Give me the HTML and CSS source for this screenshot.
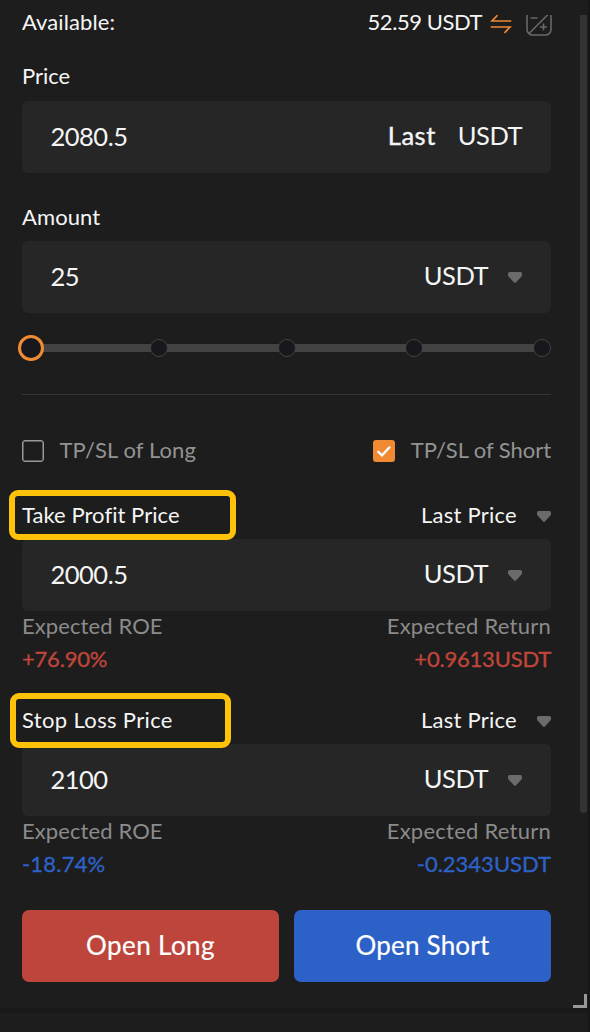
FILE: index.html
```html
<!DOCTYPE html>
<html lang="en">
<head>
<meta charset="utf-8">
<title>Futures order</title>
<link rel="stylesheet" href="styles.css">
</head>
<body>
<svg class="defs" width="0" height="0">
  <symbol id="caret" viewBox="0 0 14 11"><path d="M1.6 0h10.8Q14 0 14 1.5V3.2Q14 4 13.4 4.6L8.2 10.2Q7 11.4 5.8 10.2L.6 4.6Q0 4 0 3.2V1.5Q0 0 1.6 0z" fill="#6b6b6b"/></symbol>
</svg>
<div class="panel">
  <div class="viewport">
    <div class="form">
      <div class="row available">
        <span class="t-available">Available:</span>
        <div class="balance">
          <span class="t-balance">52.59 USDT</span>
          <svg class="swap" width="22" height="20" viewBox="0 0 22 20" fill="none" stroke="#ee8a33" stroke-width="1.7"><path d="M21.3 7H2L7.5 1.2M.7 13H20l-5.500 5.800"/></svg>
          <svg class="calc" width="26" height="26" viewBox="0 0 26 26" fill="none" stroke="#686868" stroke-width="1.6"><rect x="1" y="1" width="24" height="24" rx="5.500"/><path d="M3 23.500L24 2.500M4.500 8h7M14 17h7M17.500 13.500v7"/></svg>
        </div>
      </div>
      <div class="row price-label"><span class="t-price">Price</span></div>
      <div class="field">
        <span class="num">2080.5</span>
        <div class="unit"><span class="last">Last</span><span class="usdt">USDT</span></div>
      </div>
      <div class="row amount-label"><span class="t-amount">Amount</span></div>
      <div class="field">
        <span class="num">25</span>
        <div class="unit"><span class="usdt">USDT</span><svg class="caret"><use href="#caret"/></svg></div>
      </div>
      <div class="slider">
        <i class="handle"></i><i class="dot"></i><i class="dot"></i><i class="dot"></i><i class="dot"></i>
      </div>
      <div class="divider"></div>
      <div class="row checks">
        <div class="check"><span class="box"></span><span class="t-long">TP/SL of Long</span></div>
        <div class="check"><svg class="ticked" width="22" height="22" viewBox="0 0 22 22"><rect width="22" height="22" rx="3" fill="#f08b34"/><path d="M4.500 11.200L9 15.300L17 6.700" fill="none" stroke="#fff" stroke-width="2.300"/></svg><span class="t-short">TP/SL of Short</span></div>
      </div>
      <div class="row trigger take">
        <span class="t-take">Take Profit Price</span>
        <div class="source"><span class="t-last">Last Price</span><svg class="caret"><use href="#caret"/></svg></div>
        <div class="mark mark-take"></div>
      </div>
      <div class="field">
        <span class="num">2000.5</span>
        <div class="unit"><span class="usdt">USDT</span><svg class="caret"><use href="#caret"/></svg></div>
      </div>
      <div class="stats muted"><span class="t-roe">Expected ROE</span><span class="t-return">Expected Return</span></div>
      <div class="stats value red"><span class="t-pct">+76.90%</span><span class="t-gain">+0.9613USDT</span></div>
      <div class="row trigger stop">
        <span class="t-stop">Stop Loss Price</span>
        <div class="source"><span class="t-last">Last Price</span><svg class="caret"><use href="#caret"/></svg></div>
        <div class="mark mark-stop"></div>
      </div>
      <div class="field">
        <span class="num">2100</span>
        <div class="unit"><span class="usdt">USDT</span><svg class="caret"><use href="#caret"/></svg></div>
      </div>
      <div class="stats muted"><span class="t-roe">Expected ROE</span><span class="t-return">Expected Return</span></div>
      <div class="stats value blue"><span class="t-pct">-18.74%</span><span class="t-gain">-0.2343USDT</span></div>
      <div class="actions">
        <button class="btn long">Open Long</button>
        <button class="btn short">Open Short</button>
      </div>
    </div>
    <div class="scrollbar"></div>
  </div>
</div>
<div class="resize"></div>
</body>
</html>
```
FILE: styles.css
```css
* { box-sizing: border-box; }
body {
  margin: 0;
  width: 590px;
  height: 1032px;
  overflow: hidden;
  background: #1d1d1d;
  border-right: 2px solid #171717;
  color: #f5f5f5;
  font: 22px/28px Lato, sans-serif;
  letter-spacing: 0.1px;
  white-space: nowrap;
  position: relative;
}
.defs { position: absolute; }
.panel { height: 1013px; padding-top: 15px; border-bottom: 5px solid #191919; }
.viewport { display: flex; justify-content: space-between; height: 993px; overflow: hidden; padding: 0 1px 0 0; }
.form { width: 551px; padding-left: 22px; margin-top: -6px; flex: none; }
.scrollbar { width: 7px; height: 798px; background: #333; border-radius: 0 0 4px 4px; }
.row { display: flex; justify-content: space-between; align-items: center; height: 28px; }
.row span:not(.box) { padding-bottom: 2px; }
.row .t-available, .row .t-balance { padding-bottom: 0; }
.balance { display: flex; align-items: center; margin-right: -0.5px; }
.t-balance { letter-spacing: -0.45px; }
.swap { margin-left: 8px; margin-top: 2px; }
.calc { margin-left: 13.5px; margin-top: -1px; }
.t-price { letter-spacing: 0; }
.price-label { margin: 26px 0 10px; }
.amount-label { margin: 31px 0 9px; }
.field {
  display: flex;
  justify-content: space-between;
  align-items: center;
  height: 72px;
  padding: 0 29px 3px 28.5px;
  background: #262626;
  border-radius: 6px;
  font-size: 25.5px;
}
.num { letter-spacing: -0.5px; }
.unit { display: flex; align-items: center; }
.usdt, .last { padding-bottom: 1px; }
.usdt { letter-spacing: -0.5px; }
.last { margin-right: 22px; letter-spacing: 0.5px; -webkit-text-stroke: 0.4px; }
.caret { width: 14px; height: 11px; display: block; }
.unit .caret { margin: 3px 0 0 20px; }
.slider {
  display: flex;
  justify-content: space-between;
  align-items: center;
  height: 26px;
  margin-top: 22px;
  background: linear-gradient(#434343, #434343) center / 511px 8px no-repeat;
}
.dot { width: 18px; height: 18px; border: 1px solid #434343; border-radius: 50%; background: #17181e; }
.handle { width: 26px; height: 26px; margin: 0 -4px; border: 3px solid #f08b34; border-radius: 50%; background: #17181e; }
.divider { height: 1px; margin-top: 33px; background: #353535; }
.checks { margin-top: 42px; color: #939393; }
.check { display: flex; align-items: center; }
.box { width: 22px; height: 22px; margin-right: 15.5px; border: 1px solid #9a9a9a; box-shadow: inset 0 0 0 0.5px #9a9a9a; border-radius: 3px; }
.ticked { margin-right: 16px; }
.t-short { letter-spacing: -0.05px; }
.trigger { position: relative; margin-bottom: 9px; }
.take { margin-top: 37px; }
.stop { margin-top: 30px; }
.t-take { letter-spacing: 0.05px; }
.t-stop { letter-spacing: 0.35px; }
.t-last { letter-spacing: 0.25px; }
.source { display: flex; align-items: center; }
.source .caret { margin-left: 20px; margin-top: 1px; }
.mark { position: absolute; border: 6px solid #ffc20a; border-radius: 9px; }
.mark-take { left: -13px; top: -12px; width: 227px; height: 50px; }
.mark-stop { left: -12px; top: -14px; width: 221px; height: 55px; }
.stats { display: flex; justify-content: space-between; height: 33px; line-height: 30px; }
.t-return { letter-spacing: 0.25px; }
.value { -webkit-text-stroke: 0.35px; }
.red .t-pct { letter-spacing: -0.2px; }
.red .t-gain { letter-spacing: -0.2px; }
.blue .t-pct { letter-spacing: 0.2px; }
.blue .t-gain { letter-spacing: 0; }
.muted { color: #8b8b8b; }
.red { color: #c0453b; }
.blue { color: #2d62c8; }
.actions { display: grid; grid-template-columns: 1fr 1fr; gap: 15px; margin-top: 28px; }
.btn { height: 72px; padding: 0 0 2px; border: 0; border-radius: 7px; color: #fff; font: 26px Lato, sans-serif; letter-spacing: 0.4px; -webkit-text-stroke: 0.2px; }
.long { background: #bd453c; }
.short { background: #2c62c8; letter-spacing: 0.2px; }
.resize { position: absolute; left: 573px; top: 994px; width: 14px; height: 14px; border: solid #999; border-width: 0 3px 3px 0; }
```
